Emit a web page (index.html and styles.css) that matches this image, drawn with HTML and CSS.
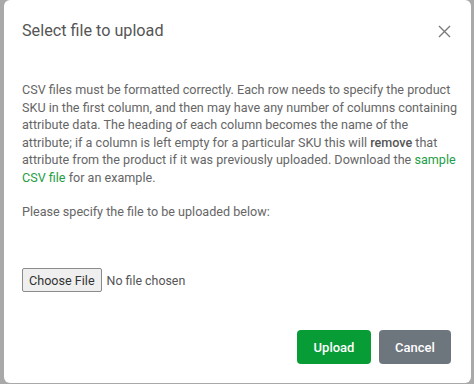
FILE: index.html
```html
<!DOCTYPE html>
<html>
<head>
<meta charset="utf-8">
<link rel="stylesheet" href="styles.css">
</head>
<body>
<div class="backdrop">
  <div class="modal">
    <div class="modal-header">
      <h5 class="modal-title">Select file to upload</h5>
      <button class="close" aria-label="Close">
        <svg width="13" height="13" viewBox="0 0 13 13"><path d="M1 1L12 12M12 1L1 12" stroke="#7a7a7a" stroke-width="1.4" fill="none"/></svg>
      </button>
    </div>
    <div class="modal-body">
      <p class="desc">CSV files must be formatted correctly. Each row needs to specify the product<br>SKU in the first column, and then may have any number of columns containing<br>attribute data. The heading of each column becomes the name of the<br>attribute; if a column is left empty for a particular SKU this will <b>remove</b> that<br>attribute from the product if it was previously uploaded. Download the <a href="#" class="link">sample<br>CSV file</a> for an example.</p>
      <p class="desc">Please specify the file to be uploaded below:</p>
      <div class="file-row">
        <input type="file" class="file-input">
      </div>
    </div>
    <div class="modal-footer">
      <button class="btn btn-upload">Upload</button>
      <button class="btn btn-cancel">Cancel</button>
    </div>
  </div>
</div>
</body>
</html>
```
FILE: styles.css
```css
html, body {
  margin: 0;
  padding: 0;
  background: #a9a9a9;
}
.backdrop {
  width: 474px;
  height: 384px;
  padding-left: 4px;
  box-sizing: border-box;
}
.modal {
  width: 467px;
  height: 383px;
  background: #fff;
  border-radius: 6px;
  display: flex;
  flex-direction: column;
  font-family: Roboto, "Liberation Sans", sans-serif;
  box-sizing: border-box;
}
.modal-header {
  display: flex;
  align-items: center;
  justify-content: space-between;
  padding: 20px 20px 0 18px;
  height: 22px;
}
.modal-title {
  margin: 0;
  font-size: 16.2px;
  font-weight: 400;
  color: #555;
  line-height: 22px;
}
.close {
  border: none;
  background: none;
  padding: 0;
  width: 13px;
  height: 13px;
  display: flex;
  cursor: pointer;
}
.modal-body {
  padding: 39px 8px 0 18px;
  flex: 1;
}
.desc {
  margin: 0 0 16px 0;
  font-size: 12.6px;
  line-height: 17.6px;
  color: #666;
  white-space: nowrap;
}
.desc b {
  font-weight: 500;
  color: #555;
}
.link {
  color: #1e9e45;
  text-decoration: none;
}
.file-row {
  margin-top: 48px;
}
.file-input {
  font-family: Roboto, "Liberation Sans", sans-serif;
  font-size: 12.4px;
  color: #555;
}
.file-input::file-selector-button {
  font-family: Roboto, "Liberation Sans", sans-serif;
  font-size: 12.6px;
  color: #333;
  height: 24px;
  padding: 0 6px;
  margin-right: 5px;
  border: 1px solid #8a8a8a;
  border-radius: 2px;
  background: #efefef;
}
.modal-footer {
  display: flex;
  justify-content: flex-end;
  gap: 8px;
  padding: 0 20px 19px 0;
}
.btn {
  height: 34px;
  border: none;
  border-radius: 4px;
  color: #fff;
  font-family: Roboto, "Liberation Sans", sans-serif;
  font-size: 13px;
  font-weight: 500;
}
.btn-upload {
  width: 74px;
  background: #089c37;
}
.btn-cancel {
  width: 72px;
  background: #6d757d;
}
```
